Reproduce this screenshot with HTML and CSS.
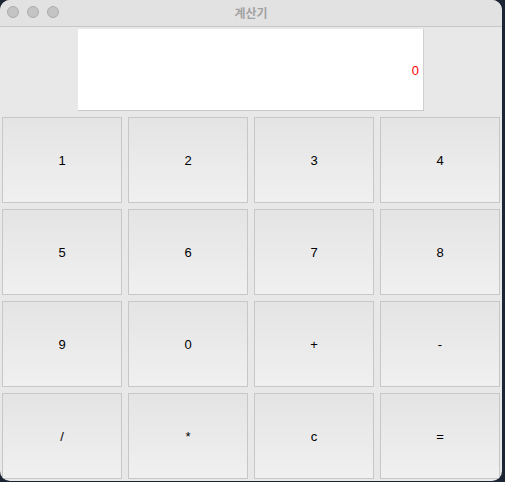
FILE: index.html
```html
<!DOCTYPE html>
<html lang="ko">
<head>
    <meta charset="utf-8" />
    <title>계산기</title>
    <link rel="stylesheet" href="styles.css">
</head>
<body>
<!--창-->
<div class="window">
    <div class="titlebar">
        <div class="lights">
            <span class="light"></span>
            <span class="light"></span>
            <span class="light"></span>
        </div>
        <span class="title">계산기</span>
    </div>
    <div class="display"><span class="result">0</span></div>
    <div class="keypad">
        <button class="key">1</button>
        <button class="key">2</button>
        <button class="key">3</button>
        <button class="key">4</button>
        <button class="key">5</button>
        <button class="key">6</button>
        <button class="key">7</button>
        <button class="key">8</button>
        <button class="key">9</button>
        <button class="key">0</button>
        <button class="key">+</button>
        <button class="key">-</button>
        <button class="key">/</button>
        <button class="key">*</button>
        <button class="key">c</button>
        <button class="key">=</button>
    </div>
</div>
</body>
</html>
```

FILE: styles.css
```css
/*기본 스타일 초기화*/
html,body{margin:0; padding:0;}
body{background:#1c2533; font-family:"Liberation Sans", Arial, sans-serif; width:505px; height:482px; overflow:hidden;}

/*창*/
.window{width:502px; height:481px; background:#e8e8e8; border-radius:10px; overflow:hidden;}

.titlebar{height:26px; border-bottom:1px solid #c6c6c6; background:#e2e2e2; display:flex; align-items:center; justify-content:center; position:relative;}
.lights{position:absolute; left:7px; top:6px; display:flex; gap:8px;}
.light{width:10px; height:10px; border-radius:50%; background:#c4c4c4; border:1px solid #acacac;}
.title{font-family:"Noto Sans CJK KR", sans-serif; font-weight:bold; font-size:12px; color:#a2a2a2; margin-top:-2px;}

/*표시창*/
.display{width:346px; height:82px; margin:2px auto 0; background:#fff; box-sizing:border-box; border-right:1px solid #cfcfcf; border-bottom:1px solid #c8c8c8; display:flex; align-items:center; justify-content:flex-end; padding-right:4px;}
.result{color:#f00; font-size:13px; margin-top:1px;}

/*버튼*/
.keypad{display:grid; grid-template-columns:repeat(4, 120px); grid-auto-rows:86px; gap:6px; padding:6px 0 0 2px;}
.key{margin:0; padding:0; box-sizing:border-box; border:1px solid #c7c7c7; background:linear-gradient(#e4e4e4, #f0f0f0); font-family:"Liberation Sans", Arial, sans-serif; font-size:13px; color:#000; cursor:pointer;}
```
